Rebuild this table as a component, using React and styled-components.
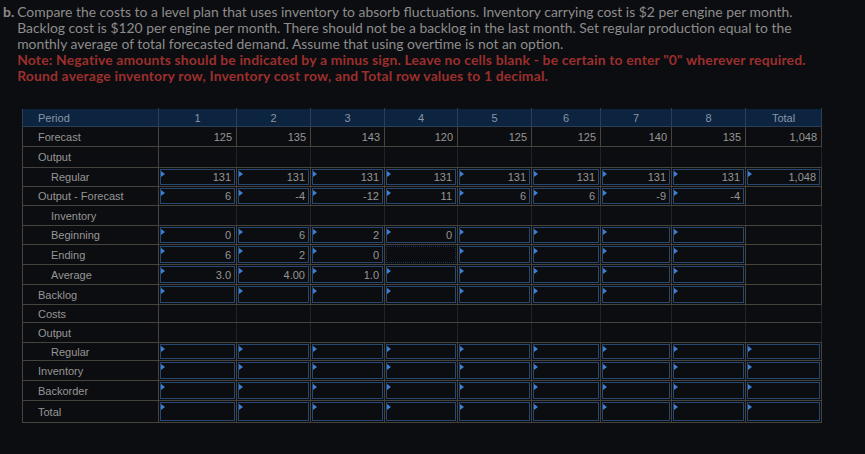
import React from 'react';
import styled, { createGlobalStyle } from 'styled-components';

const GlobalStyle = createGlobalStyle`
  html, body {
    margin: 0;
    padding: 0;
    background: #0c0d10;
  }
  body {
    width: 865px;
    height: 454px;
    overflow: hidden;
  }
`;

const Page = styled.div`
  padding: 4px 0 0 3px;
`;

const Intro = styled.div`
  display: flex;
  gap: 3px;
  font-family: Lato, "Open Sans", sans-serif;
  font-size: 13.9px;
  line-height: 16px;
  color: #8c8c8c;
`;

const Letter = styled.span`
  font-weight: 700;
`;

const Note = styled.div`
  color: #9c2f2d;
  font-weight: 700;
  letter-spacing: 0.17px;
`;

const Grid = styled.table`
  margin: 24px 0 0 19px;
  border-collapse: collapse;
  table-layout: fixed;
  width: 799px;
  font-family: "Liberation Sans", Arial, sans-serif;
  font-size: 11px;
  color: #969696;
  border: 1px solid #46423d;
`;

const HeadCell = styled.th`
  height: 17px;
  padding: 0;
  background: #0c2440;
  color: #8a96a5;
  font-weight: 400;
  text-align: ${(p) => (p.$left ? 'left' : 'center')};
  padding-left: ${(p) => (p.$left ? '15px' : '0')};
  border: 1px solid #2d3f55;
  border-top-color: #0a0b0d;
`;

const Label = styled.td`
  padding: 0 0 0 ${(p) => (p.$level ? '28px' : '15px')};
  border: 1px solid #46423d;
  white-space: nowrap;
`;

const Cell = styled.td`
  padding: ${(p) => (p.$boxed ? '1px' : '0 4px 0 0')};
  text-align: right;
  border-top: 1px solid #46423d;
  border-bottom: 1px solid #46423d;
  border-left: 1px solid ${(p) => (p.$dim ? '#222326' : '#46423d')};
  border-right: 1px solid ${(p) => (p.$dim ? '#222326' : '#46423d')};
`;

const Entry = styled.div`
  position: relative;
  box-sizing: border-box;
  height: ${(p) => p.$h}px;
  display: flex;
  align-items: center;
  justify-content: flex-end;
  padding-right: 3px;
  border: 1px ${(p) => (p.$locked ? 'dotted #1d3556' : 'solid #274870')};
  color: #969696;
`;

const Flag = styled.span`
  position: absolute;
  left: 0;
  top: 1px;
  width: 0;
  height: 0;
  border-top: 3.5px solid transparent;
  border-bottom: 3.5px solid transparent;
  border-left: 4px solid #3c7fd4;
`;

const I = (v = '') => ({ t: 'in', v });
const T = (v = '') => ({ t: 'tx', v });
const D = { t: 'dot' };
const blanks = (n) => Array.from({ length: n }, () => I());

const rows = [
  { label: 'Forecast', h: 20, cells: [125, 135, 143, 120, 125, 125, 140, 135, '1,048'].map(T) },
  { label: 'Output', h: 21, dim: true },
  { label: 'Regular', level: 1, h: 19, cells: [...Array(8).fill(131), '1,048'].map(I) },
  { label: 'Output - Forecast', h: 19, cells: [...[6, -4, -12, 11, 6, 6, -9, -4].map(I), T()] },
  { label: 'Inventory', level: 1, h: 20, dim: true },
  { label: 'Beginning', level: 1, h: 19, cells: [I(0), I(6), I(2), I(0), ...blanks(4), T()] },
  { label: 'Ending', level: 1, h: 20, cells: [I(6), I(2), I(0), D, ...blanks(4), T()] },
  { label: 'Average', level: 1, h: 20, cells: [I('3.0'), I('4.00'), I('1.0'), ...blanks(5), T()] },
  { label: 'Backlog', h: 20, cells: [...blanks(8), T()] },
  { label: 'Costs', h: 18, dim: true },
  { label: 'Output', h: 20, dim: true },
  { label: 'Regular', level: 1, h: 18, cells: blanks(9) },
  { label: 'Inventory', h: 20, cells: blanks(9) },
  { label: 'Backorder', h: 20, cells: blanks(9) },
  { label: 'Total', h: 22, cells: blanks(9) },
];

const widths = [136, 78, 74, 74, 73, 74, 69, 71, 74, 76];
const periods = ['1', '2', '3', '4', '5', '6', '7', '8', 'Total'];

const renderCell = (c, i, row) => {
  if (!c) return <Cell key={i} $dim={row.dim} />;
  if (c.t === 'tx') return <Cell key={i}>{c.v}</Cell>;
  return (
    <Cell key={i} $boxed>
      <Entry $h={row.h - 3} $locked={c.t === 'dot'}>
        {c.t === 'in' && <Flag />}
        {c.v}
      </Entry>
    </Cell>
  );
};

export default function App() {
  return (
    <Page>
      <GlobalStyle />
      <Intro>
        <Letter>b.</Letter>
        <div>
          Compare the costs to a level plan that uses inventory to absorb fluctuations. Inventory carrying cost is $2 per engine per month.
          <br />
          Backlog cost is $120 per engine per month. There should not be a backlog in the last month. Set regular production equal to the
          <br />
          monthly average of total forecasted demand. Assume that using overtime is not an option.
          <Note>
            Note: Negative amounts should be indicated by a minus sign. Leave no cells blank - be certain to enter "0" wherever required.
            <br />
            Round average inventory row, Inventory cost row, and Total row values to 1 decimal.
          </Note>
        </div>
      </Intro>
      <Grid>
        <colgroup>
          {widths.map((w, i) => <col key={i} style={{ width: w }} />)}
        </colgroup>
        <thead>
          <tr>
            <HeadCell $left>Period</HeadCell>
            {periods.map((p) => <HeadCell key={p}>{p}</HeadCell>)}
          </tr>
        </thead>
        <tbody>
          {rows.map((r, ri) => (
            <tr key={ri} style={{ height: r.h }}>
              <Label $level={r.level}>{r.label}</Label>
              {(r.cells || Array(9).fill(null)).map((c, i) => renderCell(c, i, r))}
            </tr>
          ))}
        </tbody>
      </Grid>
    </Page>
  );
}
